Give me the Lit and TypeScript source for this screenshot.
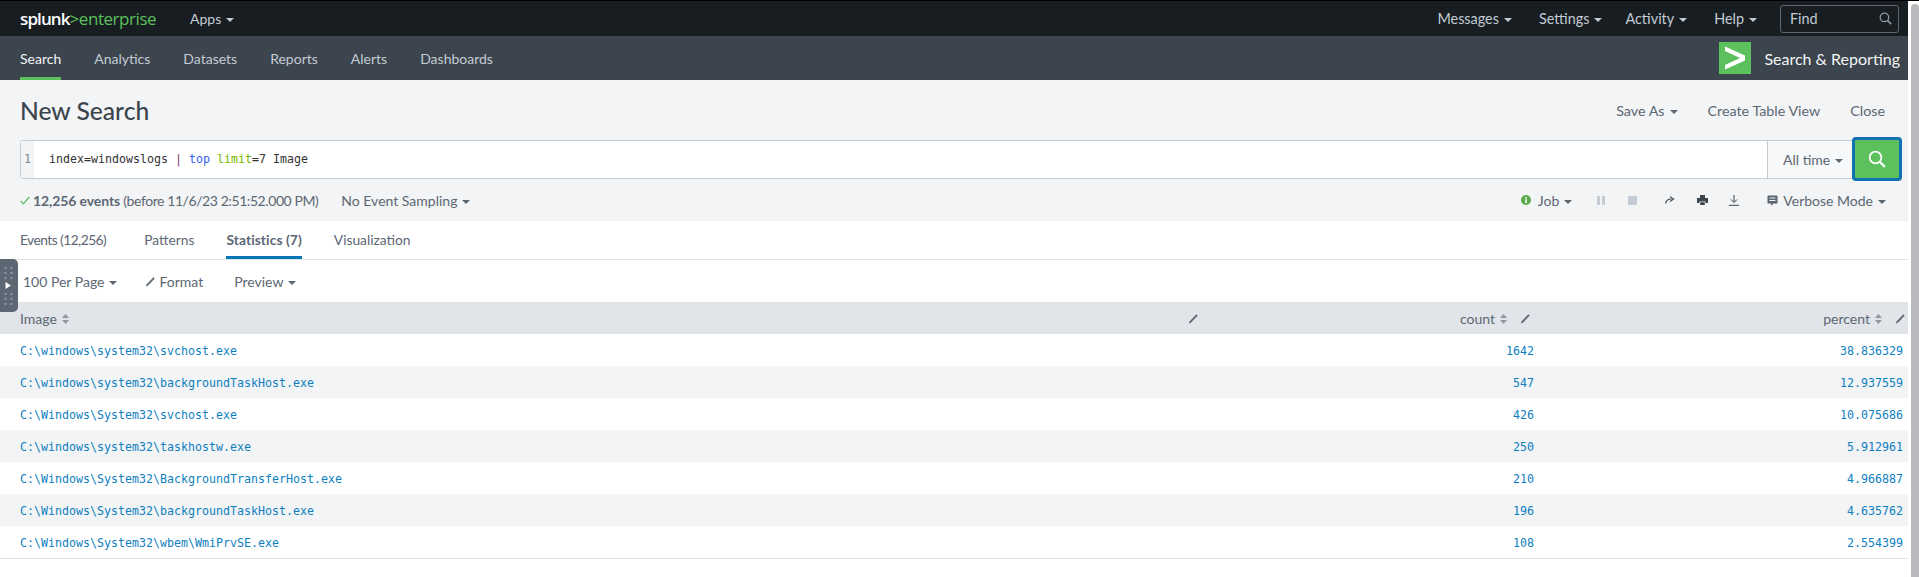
import { LitElement, html, css, svg } from "lit";
import { customElement } from "lit/decorators.js";

const caret = (cls = "") => html`<i class="caret ${cls}"></i>`;
const pencil = svg`<svg class="pen" width="11" height="11" viewBox="0 0 11 11"><path d="M1 10.4 1.5 8.4 8.4 1.2 9.7 2.5 2.9 9.7Z" fill="#5c6773"/></svg>`;
const sort = html`<svg class="sort" width="7" height="10" viewBox="0 0 7 10"><path d="M3.5 0 7 4H0ZM3.5 10 0 6H7Z" fill="#8e98a3"/></svg>`;
const mag = (c: string, s: number) => html`<svg width=${s} height=${s} viewBox="0 0 16 16"><circle cx="6.7" cy="6.7" r="5.2" fill="none" stroke=${c} stroke-width="1.6"/><path d="M10.6 10.6 15 15" stroke=${c} stroke-width="2" fill="none"/></svg>`;

const rows = [
  ["C:\\windows\\system32\\svchost.exe", "1642", "38.836329"],
  ["C:\\windows\\system32\\backgroundTaskHost.exe", "547", "12.937559"],
  ["C:\\Windows\\System32\\svchost.exe", "426", "10.075686"],
  ["C:\\windows\\system32\\taskhostw.exe", "250", "5.912961"],
  ["C:\\Windows\\System32\\BackgroundTransferHost.exe", "210", "4.966887"],
  ["C:\\Windows\\System32\\backgroundTaskHost.exe", "196", "4.635762"],
  ["C:\\Windows\\System32\\wbem\\WmiPrvSE.exe", "108", "2.554399"],
];

@customElement("app-root")
export class AppRoot extends LitElement {
  static styles = css`
    :host { display: block; height: 577px; overflow: hidden; background: #fff; font-family: "Lato", "Liberation Sans", sans-serif; font-size: 14px; color: #5c6773; position: relative; }
    * { box-sizing: border-box; }
    .topline { height: 1px; background: #000; }
    .shell { display: flex; height: 576px; }
    .page { width: 1908px; flex: none; position: relative; }
    .track { flex: 1; background: #fff; padding: 3px 0 0 3px; }
    .thumb { height: 100%; background: #b8babd; border-radius: 4px 4px 0 0; }
    .caret { display: inline-block; width: 0; height: 0; border-left: 4px solid transparent; border-right: 4px solid transparent; border-top: 4px solid currentColor; margin-left: 5px; vertical-align: 2px; }

    .nav { height: 35px; background: #171d21; display: flex; align-items: center; padding: 0 9px 0 20px; color: #c3cbd4; }
    .logo { width: 170px; font-family: "Open Sans", sans-serif; font-size: 17px; letter-spacing: -0.9px; color: #fff; font-weight: 600; }
    .logo b { color: #5cc05c; font-weight: 400; letter-spacing: -0.45px; }
    .navr { margin-left: auto; display: flex; align-items: center; font-size: 14.4px; }
    .navr span.m1 { margin-right: 27px; }
    .navr span.m2 { margin-right: 23px; }
    .navr span.m3 { margin-right: 27px; }
    .navr span.m4 { margin-right: 23px; }
    .find { width: 119px; height: 28px; border: 1px solid #5c6773; border-radius: 3px; display: flex; align-items: center; justify-content: space-between; padding: 0 6px 0 9px; }

    .app { height: 44px; background: #3c444d; display: flex; align-items: stretch; padding: 0 8px 0 20px; color: #c3cbd4; }
    .tabs { display: flex; gap: 33px; }
    .tabs a { display: flex; align-items: center; border-bottom: 3px solid transparent; padding-top: 3px; }
    .tabs a.on { color: #f2f4f5; border-bottom-color: #5cc05c; }
    .brand { margin-left: auto; display: flex; align-items: center; gap: 13px; color: #f2f4f5; font-size: 16px; }
    .brand svg { display: block; }

    .main { background: #f2f4f5; height: 141px; }
    .title { height: 57px; padding: 4px 23px 0 20px; display: flex; align-items: center; }
    h1 { margin: 0; font-weight: 500; font-size: 24.6px; color: #3c444d; }
    .acts { margin-left: auto; display: flex; gap: 30px; font-size: 14.3px; }
    .search { height: 44px; display: flex; align-items: center; padding: 0 6px 0 20px; }
    .box { flex: 1; height: 39px; border: 1px solid #c3cbd4; border-radius: 3px 0 0 3px; background: #fff; display: flex; align-items: stretch; }
    .gut { width: 13px; background: #f2f4f5; color: #7d8a96; font: 11.63px "DejaVu Sans Mono", monospace; display: flex; align-items: center; justify-content: center; flex: none; }
    .q { flex: 1; font: 11.63px "DejaVu Sans Mono", monospace; color: #333; display: flex; align-items: center; padding-left: 15px; }
    .q > span { white-space: pre; }
    .q .k { color: #3863e8; } .q .a { color: #7ab800; } .q .p { color: #7a3a6a; }
    .time { width: 85px; flex: none; border-left: 1px solid #c3cbd4; background: #f7f8fa; display: flex; align-items: center; padding-left: 15px; }
    .go { flex: none; width: 50px; height: 44px; margin-left: -1px; background: #5cc05c; border: 3px solid #0f72ae; border-radius: 4px; display: flex; align-items: center; justify-content: center; z-index: 1; }
    .status { height: 40px; display: flex; align-items: center; padding: 0 22px 2px 20px; }
    .stat { letter-spacing: -0.42px; margin-left: 3px; white-space: pre; }
    .stat strong { font-weight: 700; letter-spacing: -0.1px; }
    .sample { margin-left: 23px; }
    .jobs { margin-left: auto; display: flex; align-items: center; }
    .jobs svg { display: block; flex: none; }
    .j1 { margin-left: 7px; margin-right: 25px; }
    .j2 { margin-right: 23px; } .j3 { margin-right: 28px; } .j4 { margin-right: 22px; } .j5 { margin-right: 21px; } .j5b { margin-right: 28px; } .j6 { margin-right: 5px; }

    .rtabs { height: 39px; display: flex; padding: 0 0 0 20px; gap: 32px; border-bottom: 1px solid #e1e5e9; background: #fff; font-size: 13.8px; }
    .rtabs a { display: flex; align-items: center; padding-top: 1px; border-bottom: 3px solid transparent; height: 38px; }
    .rtabs a.on { font-weight: 700; border-bottom-color: #0877b6; letter-spacing: 0.08px; }
    .rtabs a.ev { letter-spacing: -0.55px; margin-right: 6px; }
    .tools { height: 42px; background: #fff; display: flex; align-items: center; padding-left: 23px; }
    .t2 { margin-left: 28px; display: flex; align-items: center; gap: 3px; }
    .t3 { margin-left: 31px; }

    .grid { display: grid; grid-template-columns: 1205px 340px 363px; }
    .hd { height: 32px; background: #e1e5e9; display: flex; align-items: center; color: #5c6773; font-size: 14px; }
    .hd .sort { margin-left: 5px; }
    .h1 { padding-left: 20px; justify-content: space-between; padding-right: 6px; }
    .h2 { justify-content: flex-end; padding-right: 14px; }
    .h3 { justify-content: flex-end; padding-right: 2px; }
    .h2 .pen, .h3 .pen { margin-left: 13px; }
    .c { height: 32px; padding-top: 1px; display: flex; align-items: center; font: 11.63px "DejaVu Sans Mono", monospace; color: #0f7fc0; white-space: pre; }
    .c.l { padding-left: 20px; }
    .c.n2 { justify-content: flex-end; padding-right: 11px; }
    .c.n3 { justify-content: flex-end; padding-right: 5px; }
    .alt { background: #f2f4f5; }
    .end { height: 1px; background: #e1e5e9; }

    .drawer { position: absolute; left: 0; top: 258px; width: 18px; height: 53px; background: #5c6773; border-radius: 0 5px 5px 0; display: flex; align-items: center; justify-content: center; }
    .drawer svg { display: block; }
  `;

  render() {
    return html`
      <div class="topline"></div>
      <div class="shell">
        <div class="page">
          <div class="nav">
            <div class="logo">splunk<b>&gt;enterprise</b></div>
            <span>Apps${caret()}</span>
            <div class="navr">
              <span class="m1">Messages${caret()}</span>
              <span class="m2">Settings${caret()}</span>
              <span class="m3">Activity${caret()}</span>
              <span class="m4">Help${caret()}</span>
              <div class="find"><span>Find</span>${mag("#8e98a3", 13)}</div>
            </div>
          </div>
          <div class="app">
            <div class="tabs">
              <a class="on">Search</a><a>Analytics</a><a>Datasets</a><a>Reports</a><a>Alerts</a><a>Dashboards</a>
            </div>
            <div class="brand">
              <svg width="32" height="32" viewBox="0 0 32 32"><rect width="32" height="32" fill="#5cc05c"/><path d="M6 4.5 26 13.5V18.5L6 27.5V23L21 16 6 9Z" fill="#fff"/></svg>
              <span>Search &amp; Reporting</span>
            </div>
          </div>
          <div class="main">
            <div class="title">
              <h1>New Search</h1>
              <div class="acts"><span>Save As${caret()}</span><span>Create Table View</span><span>Close</span></div>
            </div>
            <div class="search">
              <div class="box">
                <div class="gut">1</div>
                <div class="q"><span>index=windowslogs <span class="p">|</span> <span class="k">top</span> <span class="a">limit</span>=7 Image</span></div>
                <div class="time"><span>All time${caret()}</span></div>
              </div>
              <div class="go">${mag("#fff", 18)}</div>
            </div>
            <div class="status">
              <svg width="10" height="9" viewBox="0 0 10 9"><path d="M.8 5 3.5 7.8 9.2 1" fill="none" stroke="#5cc05c" stroke-width="1.2"/></svg>
              <span class="stat"><strong>12,256 events</strong> (before 11/6/23 2:51:52.000 PM)</span>
              <span class="sample">No Event Sampling${caret()}</span>
              <div class="jobs">
                <svg width="10" height="10" viewBox="0 0 10 10"><circle cx="5" cy="5" r="5" fill="#5ca84c"/><path d="M4.2 2h1.6v1.4H4.2ZM4.2 4.2h1.6V8H4.2Z" fill="#fff"/></svg>
                <span class="j1">Job${caret()}</span>
                <svg class="j2" width="8" height="9" viewBox="0 0 8 9"><path d="M0 0h3v9H0ZM5 0h3v9H5Z" fill="#c3cbd4"/></svg>
                <svg class="j3" width="9" height="9" viewBox="0 0 9 9"><rect width="9" height="9" fill="#c3cbd4"/></svg>
                <svg class="j4" width="10" height="8" viewBox="0 0 10 8"><path d="M.6 7.6C1 4.6 3.4 3 6.6 3M5 .6 8.6 3 5 5.6" fill="none" stroke="#3c444d" stroke-width="1.1"/></svg>
                <svg class="j5" width="11" height="10" viewBox="0 0 11 10"><path d="M3 0h5v3h3v5H8.6V6.4H2.4V8H0V3h3ZM3.2 7.2h4.6V10H3.2Z" fill="#3c444d"/></svg>
                <svg class="j5b" width="10" height="11" viewBox="0 0 10 11"><path d="M5 0v7M2 4.5 5 7.5 8 4.5M0 10.3h10" fill="none" stroke="#3c444d" stroke-width="1"/></svg>
                <svg class="j6" width="11" height="11" viewBox="0 0 11 11"><path d="M1 .5h9a.5.5 0 0 1 .5.5v7a.5.5 0 0 1-.5.5H6.5L4 10.8V8.5H1A.5.5 0 0 1 .5 8V1A.5.5 0 0 1 1 .5ZM2.5 2.6v1h6v-1ZM2.5 5v1h6V5Z" fill="#5c6773" fill-rule="evenodd"/></svg>
                <span>Verbose Mode${caret()}</span>
              </div>
            </div>
          </div>
          <div class="rtabs">
            <a class="ev">Events (12,256)</a><a>Patterns</a><a class="on">Statistics (7)</a><a>Visualization</a>
          </div>
          <div class="tools">
            <span>100 Per Page${caret()}</span>
            <span class="t2">${pencil}Format</span>
            <span class="t3">Preview${caret()}</span>
          </div>
          <div class="grid">
            <div class="hd h1"><span>Image${sort}</span>${pencil}</div>
            <div class="hd h2"><span>count${sort}</span>${pencil}</div>
            <div class="hd h3"><span>percent${sort}</span>${pencil}</div>
            ${rows.map((r, i) => html`
              <div class="c l ${i % 2 ? "alt" : ""}">${r[0]}</div>
              <div class="c n2 ${i % 2 ? "alt" : ""}">${r[1]}</div>
              <div class="c n3 ${i % 2 ? "alt" : ""}">${r[2]}</div>`)}
          </div>
          <div class="end"></div>
          <div class="drawer">
            <svg width="12" height="45" viewBox="0 0 12 45">
              ${[4, 9, 14, 30, 35, 40].map((y) => svg`<rect x="1.5" y=${y} width="2" height="2" fill="#8e98a3"/><rect x="7.5" y=${y} width="2" height="2" fill="#8e98a3"/>`)}
              <path d="M2.5 19 8 22.5 2.5 26Z" fill="#fff"/>
            </svg>
          </div>
        </div>
        <div class="track"><div class="thumb"></div></div>
      </div>
    `;
  }
}
